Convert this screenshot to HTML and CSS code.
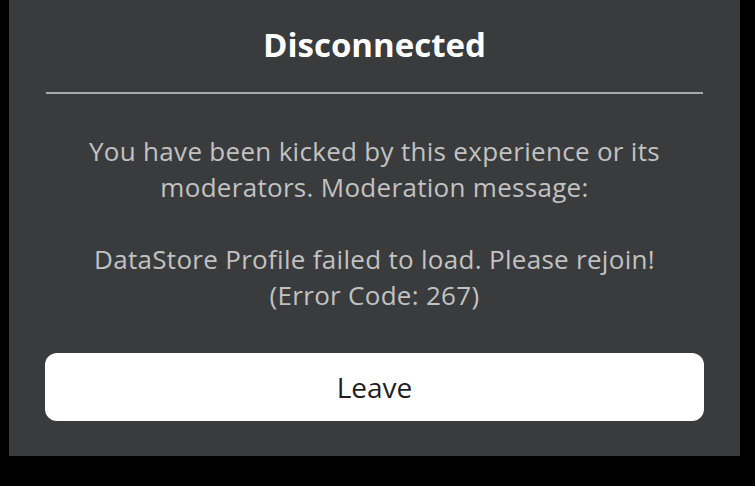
FILE: index.html
```html
<!DOCTYPE html>
<html>
<head>
<meta charset="utf-8">
<link rel="stylesheet" href="styles.css">
</head>
<body>
<div class="panel">
  <h1 class="title">Disconnected</h1>
  <div class="divider"></div>
  <p class="message">You have been kicked by this experience or its<br>moderators. Moderation message:<br><br>DataStore Profile failed to load. Please rejoin!<br>(Error Code: 267)</p>
  <button class="leave">Leave</button>
</div>
</body>
</html>
```
FILE: styles.css
```css
html, body {
  margin: 0;
  padding: 0;
  background: #000;
  width: 755px;
  height: 486px;
  overflow: hidden;
}
.panel {
  margin-left: 9px;
  width: 731px;
  height: 456px;
  box-sizing: border-box;
  background: #393b3d;
  padding: 0 36px 0 36px;
  display: flex;
  flex-direction: column;
  font-family: "Open Sans", Lato, sans-serif;
}
.title {
  margin: 0;
  padding-top: 25px;
  font-size: 33px;
  line-height: 40px;
  font-weight: 700;
  color: #fff;
  text-align: center;
}
.divider {
  margin: 27px 1px 0;
  height: 2px;
  background: #a9a9a9;
}
.message {
  margin: 39px 0 0;
  font-size: 26px;
  letter-spacing: 0.3px;
  line-height: 36px;
  color: #c2c2c2;
  text-align: center;
}
.leave {
  margin: 40px 0 0;
  height: 68px;
  border: none;
  border-radius: 12px;
  background: #fff;
  color: #1f1f1f;
  font-family: "Open Sans", Lato, sans-serif;
  font-size: 28px;
  padding: 0;
}
```
